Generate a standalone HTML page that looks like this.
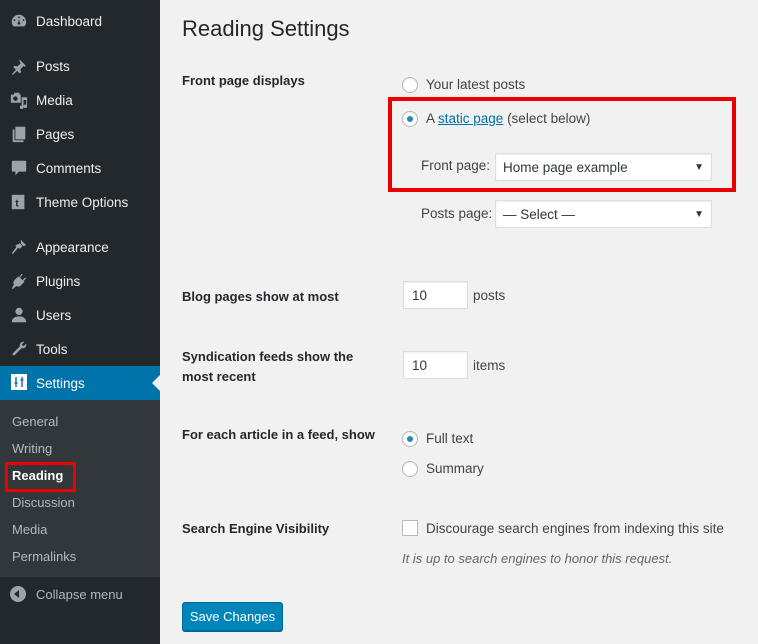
<!DOCTYPE html>
<html><head><meta charset="utf-8"><style>
*{margin:0;padding:0;box-sizing:border-box}
body{width:758px;height:644px;overflow:hidden;background:#f1f1f1;font-family:"Liberation Sans",sans-serif;color:#23282d;position:relative;font-size:13.5px}
.a{position:absolute;white-space:nowrap;line-height:20px}
#sb{position:absolute;left:0;top:0;width:160px;height:644px;background:#23282d}
.mi{position:absolute;left:36px;color:#eee;font-size:13.5px;line-height:20px}
.ic{position:absolute;left:10px;width:18px;height:18px;fill:#9ea3a8}
.sub{position:absolute;left:12px;color:#b4b9be;font-size:13px;line-height:18px}
.b{font-weight:bold;font-size:13px}
.radio{position:absolute;width:16px;height:16px;border:1px solid #b4b9be;border-radius:50%;background:#fff;box-shadow:inset 0 1px 2px rgba(0,0,0,.07)}
.radio.on::after{content:"";position:absolute;left:4px;top:4px;width:6px;height:6px;border-radius:50%;background:#1e8cbe}
.sel{position:absolute;height:28px;background:#fff;border:1px solid #ddd;box-shadow:inset 0 1px 2px rgba(0,0,0,.07);padding-left:7px;line-height:28px;font-size:13.5px;color:#32373c}
.sel::after{content:"▼";position:absolute;right:7px;top:0;font-size:10px;color:#32373c}
.inp{position:absolute;width:65px;height:28px;background:#fff;border:1px solid #ddd;box-shadow:inset 0 1px 2px rgba(0,0,0,.07);padding-left:8px;line-height:28px;color:#32373c}
</style></head><body>
<div id="sb">
 <svg class="ic" style="top:12px" viewBox="0 0 20 20"><path d="M10 3a8 8 0 0 0-8 8c0 2 .7 3.7 1.9 5h12.2A8 8 0 0 0 10 3zm0 2a1 1 0 1 1 0 2 1 1 0 0 1 0-2zM5 10a1 1 0 1 1 0-2 1 1 0 0 1 0 2zm5 4a1.5 1.5 0 0 1-.6-2.9L10 7.5l.6 3.6A1.5 1.5 0 0 1 10 14zm5-4a1 1 0 1 1 0-2 1 1 0 0 1 0 2z"/></svg>
 <div class="mi" style="top:12px">Dashboard</div>
 <svg class="ic" style="top:57px" viewBox="0 0 20 20"><path d="M10.4 2.5l7.1 7.1-1.4 1.4-1-1-3.5 3.5.7 3.5-1.4 1.4-3-3L3 20l-.9-.9 4.5-5-3-3 1.4-1.4 3.5.7 3.5-3.5-1-1z"/></svg>
 <div class="mi" style="top:57px">Posts</div>
 <svg class="ic" style="top:91px" viewBox="0 0 20 20"><path d="M1 4h3l1-2h5l1 2h1v9H1zm5 2a2.5 2.5 0 1 0 0 5 2.5 2.5 0 0 0 0-5zm7 1h6v10a2 2 0 1 1-1-1.7V10h-3v8a2 2 0 1 1-2-2z"/></svg>
 <div class="mi" style="top:91px">Media</div>
 <svg class="ic" style="top:125px" viewBox="0 0 20 20"><path d="M6 2h11v14H6zM3 5h2v12h10v2H3z"/></svg>
 <div class="mi" style="top:125px">Pages</div>
 <svg class="ic" style="top:159px" viewBox="0 0 20 20"><path d="M3 2h14a1 1 0 0 1 1 1v10a1 1 0 0 1-1 1h-7l-4 4v-4H3a1 1 0 0 1-1-1V3a1 1 0 0 1 1-1z"/></svg>
 <div class="mi" style="top:159px">Comments</div>
 <svg class="ic" style="top:193px" viewBox="0 0 20 20"><path d="M2 2h14v16H2z"/><text x="6" y="15" font-size="11" font-weight="bold" fill="#23282d" font-family="Liberation Sans">t</text></svg>
 <div class="mi" style="top:193px">Theme Options</div>
 <svg class="ic" style="top:238px" viewBox="0 0 20 20"><path d="M12 2l6 6-3 1-3-3zM11 6l3 3-3 3-2-1-6 7-1-1 5-7-1-2z"/></svg>
 <div class="mi" style="top:238px">Appearance</div>
 <svg class="ic" style="top:272px" viewBox="0 0 20 20"><path d="M13 2l1 1-3 3 3 3 3-3 1 1-3 3 1 1-4 4a4 4 0 0 1-5 .5L3 19l-1-1 2.5-4A4 4 0 0 1 5 9l4-4 1 1z"/></svg>
 <div class="mi" style="top:272px">Plugins</div>
 <svg class="ic" style="top:306px" viewBox="0 0 20 20"><circle cx="10" cy="6" r="4"/><path d="M2 18c0-4 3-6.5 8-6.5s8 2.5 8 6.5z"/></svg>
 <div class="mi" style="top:306px">Users</div>
 <svg class="ic" style="top:340px" viewBox="0 0 20 20"><path d="M16 2l-3 3 2 2 3-3a4 4 0 0 1-5 5L5 17a1.5 1.5 0 0 1-2-2l8-8a4 4 0 0 1 5-5z"/></svg>
 <div class="mi" style="top:340px">Tools</div>
 <div style="position:absolute;left:0;top:366px;width:160px;height:34px;background:#0073aa"></div>
 <div style="position:absolute;left:152px;top:375px;width:0;height:0;border-top:8px solid transparent;border-bottom:8px solid transparent;border-right:8px solid #f1f1f1"></div>
 <svg style="position:absolute;left:11px;top:374px;width:16px;height:16px" viewBox="0 0 16 16"><rect width="16" height="16" fill="#fff"/><path d="M5 3v10M3.5 9h3M11 3v10M9.5 6h3" stroke="#0073aa" stroke-width="1.4"/></svg>
 <div class="mi" style="top:374px;color:#fff">Settings</div>
 <div style="position:absolute;left:0;top:400px;width:160px;height:177px;background:#32373c"></div>
 <div class="sub" style="top:413px">General</div>
 <div class="sub" style="top:440px">Writing</div>
 <div style="position:absolute;left:5px;top:462px;width:71px;height:30px;border:3px solid #e00"></div>
 <div class="sub" style="top:467px;color:#fff;font-weight:bold">Reading</div>
 <div class="sub" style="top:494px">Discussion</div>
 <div class="sub" style="top:521px">Media</div>
 <div class="sub" style="top:548px">Permalinks</div>
 <div style="position:absolute;left:10px;top:586px;width:16px;height:16px;border-radius:50%;background:#9ea3a8"></div>
 <div style="position:absolute;left:14px;top:590px;border-top:4px solid transparent;border-bottom:4px solid transparent;border-right:5px solid #23282d"></div>
 <div class="mi" style="top:585px;color:#b4b9be;font-size:13px">Collapse menu</div>
</div>

<div class="a" style="left:182px;top:15px;font-size:22px;line-height:28px">Reading Settings</div>
<div class="a b" style="left:182px;top:71px">Front page displays</div>
<div class="radio" style="left:402px;top:77px"></div>
<div class="a" style="left:426px;top:75px;color:#444">Your latest posts</div>
<div style="position:absolute;left:388px;top:97px;width:348px;height:95px;border:4px solid #e00"></div>
<div class="radio on" style="left:402px;top:111px"></div>
<div class="a" style="left:426px;top:109px;color:#444">A <span style="color:#0073aa;text-decoration:underline">static page</span> (select below)</div>
<div class="a" style="left:421px;top:156px;color:#444">Front page:</div>
<div class="sel" style="left:495px;top:153px;width:217px">Home page example</div>
<div class="a" style="left:421px;top:204px;color:#444">Posts page:</div>
<div class="sel" style="left:495px;top:200px;width:217px">— Select —</div>

<div class="a b" style="left:182px;top:287px">Blog pages show at most</div>
<div class="inp" style="left:403px;top:281px">10</div>
<div class="a" style="left:473px;top:286px;color:#444">posts</div>
<div class="a b" style="left:182px;top:347px;line-height:20px">Syndication feeds show the<br>most recent</div>
<div class="inp" style="left:403px;top:351px">10</div>
<div class="a" style="left:473px;top:356px;color:#444">items</div>
<div class="a b" style="left:182px;top:425px">For each article in a feed, show</div>
<div class="radio on" style="left:402px;top:431px"></div>
<div class="a" style="left:426px;top:429px;color:#444">Full text</div>
<div class="radio" style="left:402px;top:461px"></div>
<div class="a" style="left:426px;top:459px;color:#444">Summary</div>
<div class="a b" style="left:182px;top:519px">Search Engine Visibility</div>
<div style="position:absolute;left:402px;top:520px;width:16px;height:16px;border:1px solid #b4b9be;background:#fff"></div>
<div class="a" style="left:426px;top:519px;color:#444">Discourage search engines from indexing this site</div>
<div class="a" style="left:402px;top:549px;color:#666;font-style:italic;font-size:13px">It is up to search engines to honor this request.</div>
<div style="position:absolute;left:182px;top:602px;width:101px;height:29px;background:#0085ba;border:1px solid #006799;border-radius:3px;box-shadow:0 1px 0 #006799;color:#fff;font-size:13px;line-height:28px;text-align:center">Save Changes</div>
</body></html>
